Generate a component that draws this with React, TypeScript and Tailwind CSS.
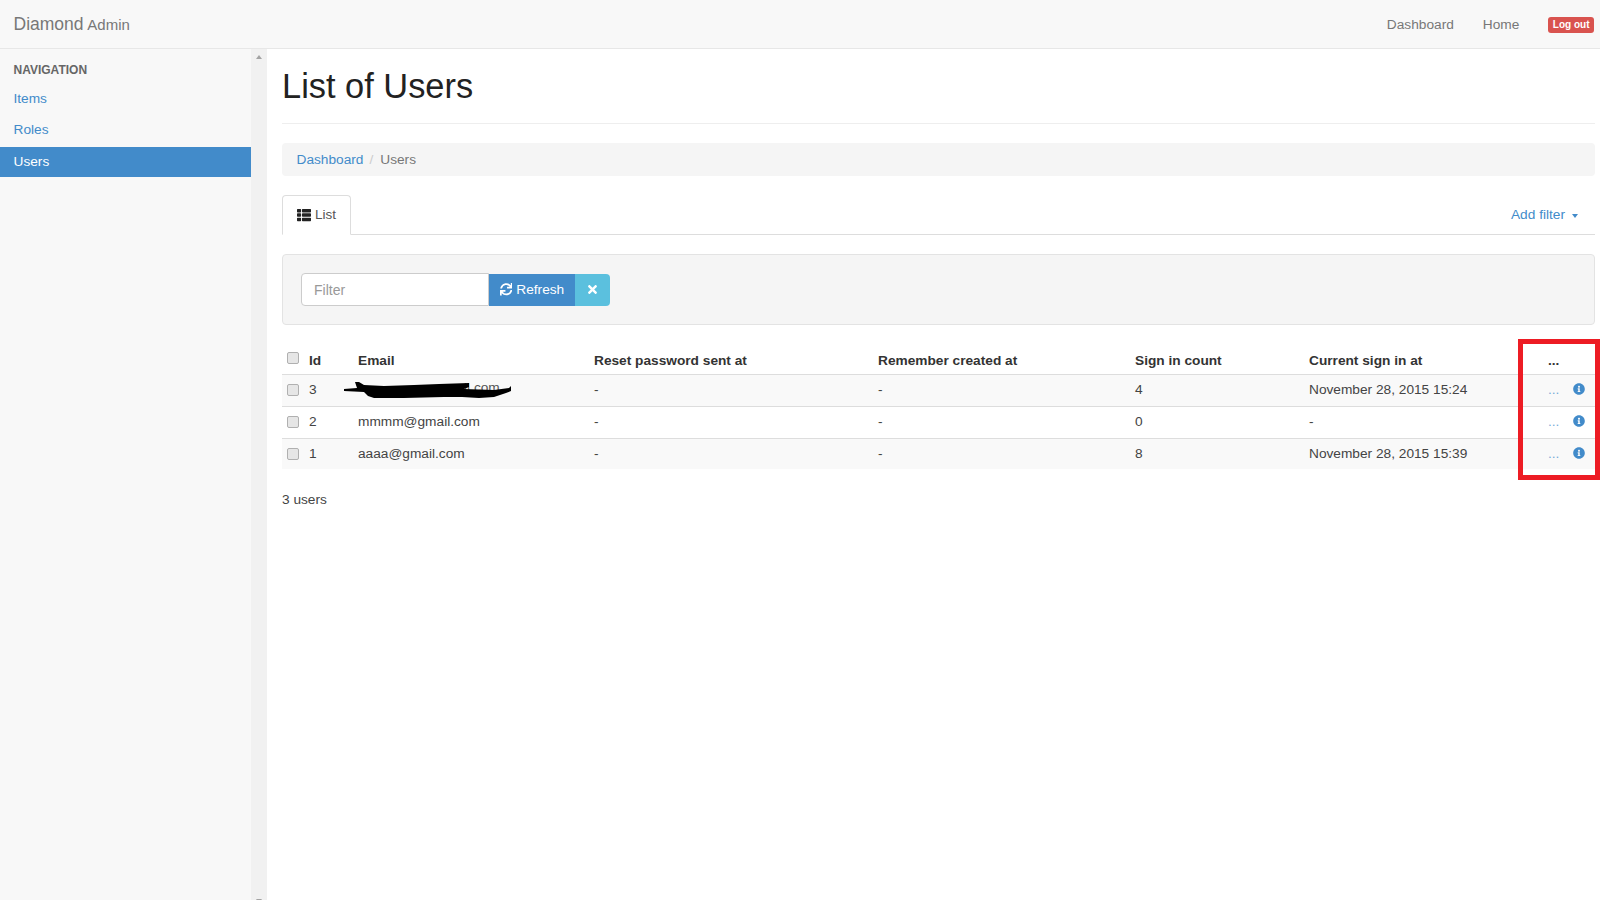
import { FaInfoCircle, FaSync, FaThList, FaTimes } from "react-icons/fa";

const rows = [
  { id: 3, email: "", sign: "4", current: "November 28, 2015 15:24", odd: true },
  { id: 2, email: "mmmm@gmail.com", sign: "0", current: "-", odd: false },
  { id: 1, email: "aaaa@gmail.com", sign: "8", current: "November 28, 2015 15:39", odd: true },
];

function Check() {
  return (
    <input
      type="checkbox"
      className="block h-[12px] w-[12px] appearance-none rounded-[2px] border border-[#b0b0b0] bg-[#e6e6e6]"
    />
  );
}

// the blacked-out address in the first row
function Scribble() {
  return (
    <div className="relative -ml-[14px] h-[18px] w-[170px]">
      <span className="absolute top-[-3px] left-[120px] text-[#555]">il.com</span>
      <svg width="170" height="18" viewBox="0 0 170 18" className="absolute top-0 left-0">
        <path
          d="M0 8 L13 7 L11 1 L15 1 L20 4 L40 5 L70 4 L95 3 L125 2 L125 6 L120 8 L150 9 L165 7 L167 5 L167 10 L162 12 L150 16 L135 17 L118 16 L100 16 L60 17 L30 17 L24 15 L20 11 L0 10 Z"
          fill="#000"
        />
      </svg>
    </div>
  );
}

export default function App() {
  return (
    <div className="relative flex h-[900px] flex-col overflow-hidden bg-white font-['Liberation_Sans',Arial,sans-serif] text-[13.7px] leading-[20px] text-[#444]">
      <nav className="flex h-[49px] shrink-0 items-center justify-between border-b border-[#e7e7e7] bg-[#f8f8f8]">
        <a className="pt-[1px] pl-[13.5px] text-[#777]">
          <span className="text-[17.5px]">Diamond</span>{" "}
          <span className="text-[15px]">Admin</span>
        </a>
        <div className="flex items-center text-[#777]">
          <a className="pt-[1px]">Dashboard</a>
          <a className="ml-[29px] pt-[1px]">Home</a>
          <span className="mt-[2px] mr-[6px] ml-[29px] rounded-[3px] bg-[#d9534f] px-[4.5px] text-[10px] leading-[16px] font-bold text-white">
            Log out
          </span>
        </div>
      </nav>

      <div className="flex min-h-0 flex-1">
        <aside className="flex w-[267px] shrink-0">
          <div className="w-[251px] bg-[#f8f8f8]">
            <div className="px-[13.5px] pt-[13px] pb-[3.5px] text-[12px] leading-[17px] font-bold text-[#666]">NAVIGATION</div>
            <a className="block px-[13.5px] py-[5px] leading-[21.5px] text-[#428bca]">Items</a>
            <a className="block px-[13.5px] py-[5px] leading-[21.5px] text-[#428bca]">Roles</a>
            <a className="mt-[1px] block bg-[#428bca] px-[13.5px] py-[5px] leading-[20.5px] text-white">Users</a>
          </div>
          <div className="relative w-[16px] bg-[#f1f1f1]">
            <div className="absolute top-[6px] left-[5px] h-0 w-0 border-x-[3.5px] border-b-[4px] border-x-transparent border-b-[#a3a3a3]" />
            <div className="absolute bottom-[-3px] left-[5px] h-0 w-0 border-x-[3.5px] border-t-[4px] border-x-transparent border-t-[#a3a3a3]" />
          </div>
        </aside>

        <main className="min-w-0 flex-1 pr-[5px] pl-[15px]">
          <h1 className="mt-[15px] h-[60px] border-b border-[#eee] pb-0 text-[34.4px] leading-[44px] font-normal text-[#222]">
            List of Users
          </h1>
          <div className="mt-[19px] flex h-[33px] items-center rounded-[4px] bg-[#f5f5f5] pl-[14.5px]">
            <a className="text-[#428bca]">Dashboard</a>
            <span className="px-[6px] text-[#ccc]">/</span>
            <span className="pl-[1px] text-[#777]">Users</span>
          </div>
          <div className="mt-[19px] flex h-[40px] items-end justify-between border-b border-[#ddd]">
            <div className="-mb-px flex h-[40px] w-[69px] items-center justify-center gap-[4px] rounded-t-[4px] border border-[#ddd] border-b-white bg-white text-[13.5px] text-[#555]">
              <FaThList className="h-[14px] w-[14px] text-[#222]" />
              List
            </div>
            <a className="mr-[17px] mb-[9px] flex items-center gap-[7px] text-[13.7px] text-[#428bca]">
              Add filter
              <span className="mt-[2px] h-0 w-0 border-x-[3.5px] border-t-[4px] border-x-transparent border-t-[#428bca]" />
            </a>
          </div>
          <div className="mt-[19px] flex h-[71px] items-center rounded-[4px] border border-[#e3e3e3] bg-[#f5f5f5] pl-[18px]">
            <input
              placeholder="Filter"
              className="h-[33px] w-[188px] rounded-l-[4px] border border-[#ccc] bg-white px-[12px] text-[14px] placeholder:text-[#999]"
            />
            <button className="flex h-[32px] w-[86px] items-center justify-center gap-[4px] bg-[#428bca] text-[13.7px] text-white">
              <FaSync className="h-[12.5px] w-[12.5px]" />
              Refresh
            </button>
            <button className="flex h-[32px] w-[35px] items-center justify-center rounded-r-[4px] bg-[#5bc0de] text-white">
              <FaTimes className="h-[13px] w-[13px]" />
            </button>
          </div>

          <table className="mt-[14px] w-full table-fixed border-collapse">
            <colgroup>
              <col className="w-[27px]" />
              <col className="w-[49px]" />
              <col className="w-[236px]" />
              <col className="w-[284px]" />
              <col className="w-[257px]" />
              <col className="w-[174px]" />
              <col className="w-[238px]" />
              <col />
            </colgroup>
            <thead>
              <tr className="h-[35px] border-b border-[#ddd] text-left text-[#333]">
                <th className="pt-[10px] pl-[5px]"><div className="-mt-[6px]"><Check /></div></th>
                <th className="pt-[10px] font-bold">Id</th>
                <th className="pt-[10px] font-bold">Email</th>
                <th className="pt-[10px] font-bold">Reset password sent at</th>
                <th className="pt-[10px] font-bold">Remember created at</th>
                <th className="pt-[10px] font-bold">Sign in count</th>
                <th className="pt-[10px] font-bold">Current sign in at</th>
                <th className="pt-[10px] pl-[1px] font-bold">...</th>
              </tr>
            </thead>
            <tbody>
              {rows.map((r) => (
                <tr key={r.id} className={`h-[32px] border-b border-[#ddd] last:h-[31px] last:border-b-0 ${r.odd ? "bg-[#f9f9f9]" : "bg-white"}`}>
                  <td className="pl-[5px]"><Check /></td>
                  <td>{r.id}</td>
                  <td>{r.email || <Scribble />}</td>
                  <td>-</td>
                  <td>-</td>
                  <td>{r.sign}</td>
                  <td>{r.current}</td>
                  <td className="pl-[1px]">
                    <div className="flex items-center">
                      <a className="w-[25px] text-[#428bca] opacity-70">...</a>
                      <FaInfoCircle className="-mt-[2px] h-[12px] w-[12px] text-[#428bca]" />
                    </div>
                  </td>
                </tr>
              ))}
            </tbody>
          </table>
          <p className="mt-[21px]">3 users</p>
        </main>
      </div>

      <div className="pointer-events-none absolute top-[339px] right-0 h-[141px] w-[82px] border-[5px] border-[#ed1c24]" />
    </div>
  );
}
